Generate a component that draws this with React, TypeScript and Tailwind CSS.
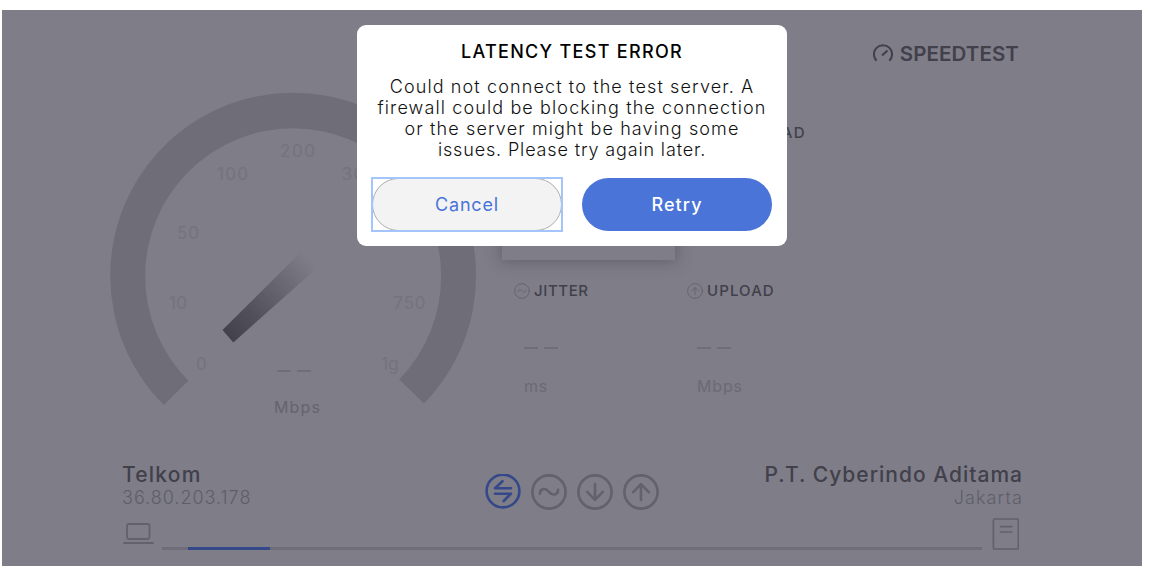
import type { ReactNode } from "react";

interface IconProps {
  className?: string;
}

interface MetricProps {
  icon: ReactNode;
  label: string;
  unit: string;
  labelClass: string;
}

const ticks = [
  { label: "0", x: 201.5, y: 369.5, width: 11 },
  { label: "10", x: 178, y: 308.5, width: 18 },
  { label: "50", x: 188, y: 238.5, width: 22 },
  { label: "100", x: 232.5, y: 179.5, width: 31 },
  { label: "200", x: 297.5, y: 156.5, width: 35 },
  { label: "300", x: 359, y: 179.5, width: 35 },
  { label: "750", x: 409.5, y: 308.5, width: 32 },
  { label: "1g", x: 390, y: 369.5, width: 17.5 },
];

function ArrowIcon({ className, up = false }: IconProps & { up?: boolean }) {
  return (
    <svg
      viewBox="0 0 36 36"
      className={className}
      fill="none"
      stroke="currentColor"
      strokeLinecap="round"
      strokeLinejoin="round"
    >
      <circle cx="18" cy="18" r="16.6" />
      {up ? (
        <path d="M18 26V10.5M10.2 18.2L18 10.2l7.8 8" />
      ) : (
        <path d="M18 10v15.5M10.2 17.8l7.8 8 7.8-8" />
      )}
    </svg>
  );
}

function WaveIcon({ className }: IconProps) {
  return (
    <svg
      viewBox="0 0 36 36"
      className={className}
      fill="none"
      stroke="currentColor"
      strokeLinecap="round"
    >
      <circle cx="18" cy="18" r="16.6" />
      <path d="M8.9 19.8c0-5.6 5.6-6.2 9.1-2s9.1 3.6 9.1-2" />
    </svg>
  );
}

function PingIcon({ className }: IconProps) {
  return (
    <svg
      viewBox="0 0 36 36"
      className={className}
      fill="none"
      stroke="currentColor"
      strokeLinecap="round"
      strokeLinejoin="round"
    >
      <circle cx="18" cy="17" r="16.4" />
      <path d="M26 14.2H10l7.5-7M10 19.7h16l-7.3 7.3" />
    </svg>
  );
}

function Dashes() {
  return (
    <div className="flex gap-1.5">
      <span className="h-0.5 w-3.5 bg-[#6e6d78]" />
      <span className="h-0.5 w-3.5 bg-[#6e6d78]" />
    </div>
  );
}

function MetricLabel({ icon, label, labelClass }: Omit<MetricProps, "unit">) {
  return (
    <div className="flex h-5 items-center gap-1 text-[#41404b]">
      {icon}
      <span className={labelClass}>{label}</span>
    </div>
  );
}

function Metric({ icon, label, unit, labelClass }: MetricProps) {
  return (
    <div className="h-[158px] pl-3 pt-[21px]">
      <MetricLabel icon={icon} label={label} labelClass={labelClass} />
      <div className="pl-2.5 pt-[46px]">
        <Dashes />
      </div>
      <p className="mt-[25px] pl-2.5 text-[16px] leading-6 tracking-[0.85px] text-[#6b6a75]">
        {unit}
      </p>
    </div>
  );
}

function Gauge() {
  return (
    <svg
      viewBox="100 80 390 340"
      className="-ml-[23px] h-[340px] w-[390px] shrink-0"
    >
      <defs>
        <linearGradient
          id="needle"
          gradientUnits="userSpaceOnUse"
          x1="228"
          y1="336"
          x2="310"
          y2="260"
        >
          <stop offset="0" stopColor="#42414c" />
          <stop offset="0.3" stopColor="#51505b" />
          <stop offset="1" stopColor="#7e7d88" />
        </linearGradient>
      </defs>
      <path
        d="M163.9 405.1A182.9 182.9 0 1 1 424 403.5L399.2 379.5A148 148 0 1 0 188.3 380.7Z"
        fill="#6e6d78"
      />
      <path d="M222.5 330L233.3 342.5L317 268L302 251Z" fill="url(#needle)" />
      {ticks.map((tick) => (
        <text
          key={tick.label}
          x={tick.x - tick.width / 2}
          y={tick.y}
          textLength={tick.width}
          fontSize="17"
          fill="#74737e"
        >
          {tick.label}
        </text>
      ))}
      <path d="M277 371h14M297 371h14" stroke="#6e6d78" strokeWidth="2" />
      <text x="274" y="413" textLength="46" fontSize="16" fill="#65646f">
        Mbps
      </text>
    </svg>
  );
}

function Dialog() {
  return (
    <div
      role="alertdialog"
      className="absolute left-[355px] top-[15px] h-[221px] w-[430px] rounded-[9px] bg-white px-[15px] pt-[14px] text-center"
    >
      <h1 className="pt-px text-[18px] font-medium leading-6 tracking-[1.3px] text-black">
        LATENCY TEST ERROR
      </h1>
      <p className="mt-3 whitespace-nowrap text-[18px] font-light leading-[21px] tracking-[1.12px] text-[#111]">
        Could not connect to the test server. A<br />
        firewall could be blocking the connection
        <br />
        or the server might be having some
        <br />
        <span className="tracking-[0.85px]">
          issues. Please try again later.
        </span>
      </p>
      <div className="mt-[18px] flex gap-5 text-[18px]">
        <button className="h-[53px] w-[190px] tracking-[0.8px] outline-2 -outline-offset-1 outline-[#a3c5fb]">
          <span className="flex h-full items-center justify-center rounded-full border border-[#adadad] bg-[#f3f3f3] text-[#4a74d8]">
            Cancel
          </span>
        </button>
        <button className="h-[53px] w-[190px] rounded-full bg-[#4a74d8] font-medium tracking-[1.1px] text-white">
          Retry
        </button>
      </div>
    </div>
  );
}

export default function App() {
  return (
    <div className="h-[566px] w-[1155px] overflow-hidden bg-white pl-0.5 pt-2.5 font-['Inter',sans-serif]">
      <div className="relative h-[556px] w-[1140px] bg-[#7e7d88]">
        <div className="mx-auto w-[898px]">
          <header className="flex h-[70px] justify-end gap-[7px] pt-[34px] text-[#41404b]">
            <svg
              viewBox="0 0 20 18"
              className="h-[18px] w-5"
              fill="none"
              stroke="currentColor"
              strokeWidth="2"
            >
              <path d="M3.6 16.8A9.1 9.1 0 1 1 16.4 16.8" />
              <path d="M9 11.5L14.5 6.5" strokeWidth="2.2" />
            </svg>
            <span className="mr-0.5 text-[20.5px] font-semibold leading-5 tracking-[0.1px]">
              SPEEDTEST
            </span>
          </header>

          <main className="flex h-[340px]">
            <Gauge />
            <div className="ml-3 mt-[22px] grid h-[316px] grid-cols-[173px_173px]">
              <div className="h-[158px] shadow-[0_0_14px_2px_rgba(60,59,70,0.4)]" />
              <div className="pl-3 pt-[21px]">
                <MetricLabel
                  icon={
                    <ArrowIcon className="size-4 stroke-2 text-[#62616c]" />
                  }
                  label="DOWNLOAD"
                  labelClass="text-[15px] font-medium tracking-[1.2px]"
                />
              </div>
              <Metric
                icon={<WaveIcon className="size-4 stroke-2 text-[#62616c]" />}
                label="JITTER"
                unit="ms"
                labelClass="text-[15px] font-medium tracking-[0.6px]"
              />
              <Metric
                icon={
                  <ArrowIcon up className="size-4 stroke-2 text-[#62616c]" />
                }
                label="UPLOAD"
                unit="Mbps"
                labelClass="text-[15px] font-medium tracking-[1.1px]"
              />
            </div>
          </main>

          <footer className="pt-[43px]">
            <div className="grid grid-cols-[362px_1fr_362px]">
              <div>
                <p className="-ml-px text-[21px] font-medium leading-6 tracking-[1.2px] text-[#41404b]">
                  Telkom
                </p>
                <p className="-ml-px -mt-px text-[18px] font-light leading-6 tracking-[0.98px] text-[#5e5d68]">
                  36.80.203.178
                </p>
              </div>
              <div className="flex gap-2.5 pt-[11px] text-[#62616c]">
                <PingIcon className="size-9 stroke-[2.6] text-[#34488a]" />
                <WaveIcon className="size-9 stroke-[2.6]" />
                <ArrowIcon className="size-9 stroke-[2.6]" />
                <ArrowIcon up className="size-9 stroke-[2.6]" />
              </div>
              <div className="-mr-0.5 whitespace-nowrap text-right">
                <p className="text-[21px] font-medium leading-6 tracking-[1px] text-[#41404b]">
                  P.T. Cyberindo Aditama
                </p>
                <p className="-mt-px text-[18px] font-light leading-6 tracking-[1.1px] text-[#5e5d68]">
                  Jakarta
                </p>
              </div>
            </div>
            <div className="mt-2 flex text-[#62616c]">
              <svg
                viewBox="0 0 31 32"
                className="h-8 w-[31px]"
                fill="none"
                stroke="currentColor"
                strokeWidth="1.8"
                strokeLinecap="round"
              >
                <rect x="4" y="6" width="22.5" height="15" rx="2.2" />
                <path d="M1 25h29" />
              </svg>
              <div className="ml-2 mt-[29px] h-[3px] w-[820px] bg-[#6e6d78]">
                <div className="ml-[26px] h-[3px] w-[82px] bg-[#34488a]" />
              </div>
              <svg
                viewBox="0 0 28 32"
                className="ml-[9px] h-8 w-7"
                fill="none"
                stroke="currentColor"
                strokeWidth="1.7"
              >
                <rect x="2.4" y="1" width="25" height="30" rx="1.2" />
                <path d="M8.8 8.6h12.6M8.8 14h12.6" />
              </svg>
            </div>
          </footer>
        </div>
        <Dialog />
      </div>
    </div>
  );
}
